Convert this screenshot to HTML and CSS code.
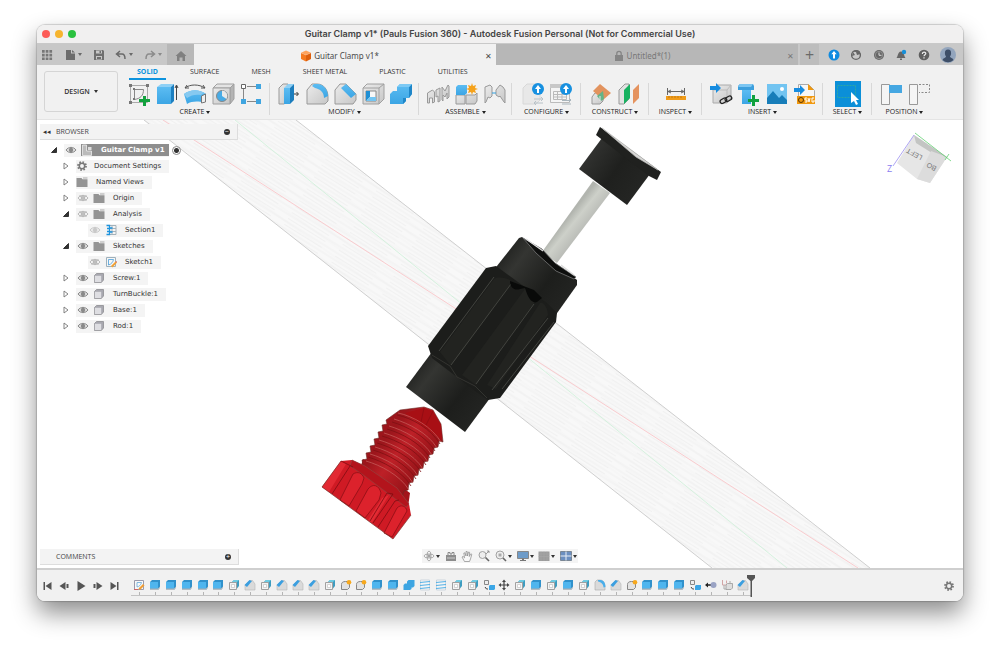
FILE: index.html
```
<!DOCTYPE html>
<html lang="en">
<head>
    <meta charset="utf-8">
    <title>Guitar Clamp v1* - Autodesk Fusion Personal</title>
    <link rel="stylesheet" href="styles.css">
</head>
<body>
    <!-- icon sprite -->
    <svg class="sprite" aria-hidden="true">
        <defs>
            <linearGradient id="blue" x1="0" y1="0" x2="0" y2="1"><stop offset="0" stop-color="#5cbcf2"/><stop offset="1" stop-color="#3ba5e4"/></linearGradient>
            <linearGradient id="grey" x1="0" y1="0" x2="1" y2="1"><stop offset="0" stop-color="#ececec"/><stop offset="1" stop-color="#c6c6c6"/></linearGradient>
        </defs>

        <!-- create -->
        <symbol id="i-sketch" viewBox="0 0 24 24"><path d="M3.500 3.500h17v17h-17z" fill="none" stroke="#aaa"/><path d="M7.500 17.500v-10h9c0 6-3 9-9 10z" fill="none" stroke="#888"/><path d="M2 2h3v3H2zM19 2h3v3h-3zM2 19h3v3H2zM6 6h2v2H6zM6 16h2v2H6z" fill="#777"/><path d="M16 14h3v3h4v3h-4v4h-3v-4h-4v-3h4z" fill="#12a13d"/></symbol>
        <symbol id="i-extrude" viewBox="0 0 24 24"><path d="M2 5l4-3h13l-3 3z" fill="#8fd0f5"/><path d="M16 5l3-3v17l-3 3z" fill="#1c7fc0"/><path d="M2 5h14v17H2z" fill="url(#blue)"/><path d="M21.500 18V4M20 6l1.500-3L23 6" fill="none" stroke="#444"/></symbol>
        <symbol id="i-revolve" viewBox="0 0 24 24"><path d="M2 6C7 2 16 2 22 6M2 6l2-3M2 6h4M22 6h-4M22 6l-2-3" fill="none" stroke="#555"/><path d="M1 12c7-5 15-5 22 0l-2 9c-5-2-12-2-17 1z" fill="url(#blue)"/><path d="M1 12c7-5 15-5 22 0-3-1-4 0-5 1-5-1-10 0-14 3z" fill="#86c9f0"/><path d="M18.500 14l4-2v8l-4 1z" fill="#eee" stroke="#777"/></symbol>
        <symbol id="i-hole" viewBox="0 0 24 24"><path d="M2 6l4-4h17l-4 4z" fill="#e4e4e4" stroke="#a0a0a0"/><path d="M19 6l4-4v15l-4 5z" fill="#b4b4b4" stroke="#a0a0a0"/><path d="M2 6h17v16H2z" fill="url(#grey)" stroke="#a0a0a0"/><circle cx="11" cy="14" r="5.500" fill="#47abe6" stroke="#888"/><path d="M11 14V8.500a5.500 5.500 0 0 1 4.500 8.500z" fill="#e9e9e9"/></symbol>
        <symbol id="i-pattern" viewBox="0 0 24 24"><path d="M4.500 7v10M8 4.500h9M8 19.500h9" fill="none" stroke="#888"/><path d="M2.500 2.500h4v4h-4z" fill="#fff" stroke="#666"/><path d="M17 2h5v5h-5zM2 17h5v5H2zM17 17h5v5h-5z" fill="#3fa5e0"/></symbol>
        <!-- modify -->
        <symbol id="i-press" viewBox="0 0 24 24"><path d="M2 6l4-4h5v17l-4 3H2z" fill="url(#grey)" stroke="#999"/><path d="M7 6l4-4h6l-4 4z" fill="#8ed0f5"/><path d="M7 6h6v16H7z" fill="url(#blue)"/><path d="M13 6l4-4v16l-4 4z" fill="#1b7dbd"/><path d="M17 12h4M19.500 10l2 2-2 2" fill="none" stroke="#333"/></symbol>
        <symbol id="i-fillet" viewBox="0 0 24 24"><path d="M2 8l5-6h5c7 0 11 6 11 13v4l-3 3H2z" fill="url(#grey)" stroke="#999"/><path d="M9 2h4c7 1 10 7 10 12l-4 2c0-6-4-9-9-10l-3-2z" fill="url(#blue)"/></symbol>
        <symbol id="i-chamfer" viewBox="0 0 24 24"><path d="M2 8l5-6h6l10 10v6l-3 4H2z" fill="url(#grey)" stroke="#999"/><path d="M13 2l10 10-5 4L8 6z" fill="url(#blue)"/></symbol>
        <symbol id="i-shell" viewBox="0 0 24 24"><path d="M2 6l4-4h17v15l-5 5H2z" fill="url(#grey)" stroke="#a0a0a0"/><path d="M18 6l5-4M18 6v16M2 6h16" stroke="#a0a0a0"/><path d="M5 9h10v10H5z" fill="#f8f8f8" stroke="#888"/><path d="M5 9h4v6l-4 4z" fill="#1f8fd4"/><path d="M5 19l4-4h6v4z" fill="#73c5f2"/></symbol>
        <symbol id="i-combine" viewBox="0 0 24 24"><path d="M8 5l3-3h12v10l-3 4h-3v3l-3 3H1V12l3-3h4z" fill="url(#blue)"/><path d="M20 5l3-3v10l-3 4zM14 16h3v3l-3 3z" fill="#1f86c8"/><path d="M8 5l3-3h12l-3 3z" fill="#7cc9f4"/></symbol>
        <!-- assemble -->
        <symbol id="i-component" viewBox="0 0 24 24"><path d="M1.500 11l5-3 2 2v10l-2 1v-5h-3v5h-2zM10 8l4-2v13l-2 1v-6l-2 1zM16 5l3 4 3-6 1 1v11l-2 2v-6l-2 4-2-2v6l-1-1z" fill="url(#grey)" stroke="#999"/></symbol>
        <symbol id="i-newcomp" viewBox="0 0 24 24"><path d="M2 13h9v9H2zM12 13h9l2-2v8l-2 3h-9z" fill="url(#grey)" stroke="#999"/><path d="M2 5l2-2h9v8l-2 2H2z" fill="url(#blue)"/><path d="M18 1l1 3 3-1-1 3 3 1-3 1 1 3-3-1-1 3-1-3-3 1 1-3-3-1 3-1-1-3 3 1z" fill="#f5a21b"/></symbol>
        <symbol id="i-joint" viewBox="0 0 24 24"><path d="M3 5l5-2 2 2v9l-2 2-2-1-2 5-1 1zM21 5l-3-2-4 5v5l3 2 1-1 4 6 1 1V8z" fill="url(#grey)" stroke="#999"/><path d="M10 11h4" stroke="#2f9fe0"/></symbol>
        <!-- configure -->
        <symbol id="i-config" viewBox="0 0 24 24"><path d="M2 6l4-4h13v16l-4 4H2z" fill="#e8e8e8" stroke="#d8d8d8"/><circle cx="17" cy="7" r="6" fill="#1790e0"/><path d="M17 3l3 4h-2v4h-2V7h-2z" fill="#fff"/><path d="M13 17h9M20 15l2 2-2 2M22 21h-9M15 19l-2 2 2 2" stroke="#b8c2c8" fill="none"/></symbol>
        <symbol id="i-table" viewBox="0 0 24 24"><path d="M1.500 2.500h19v18h-19z" fill="#f5f5f5" stroke="#bbb"/><path d="M1 2h20v4H1z" fill="#c8c8c8"/><path d="M4.500 9.500h13v8h-13zM4 12.500h14M4 15h14M8.500 9v9M13 9v9" fill="none" stroke="#bbb"/><circle cx="17" cy="7" r="6" fill="#1790e0"/><path d="M17 3l3 4h-2v4h-2V7h-2z" fill="#fff"/><path d="M13 18.500h9M20 16l2 2-2 2M22 22h-9" stroke="#a9b5bc" fill="none"/></symbol>
        <!-- construct -->
        <symbol id="i-plane" viewBox="0 0 24 24"><path d="M3 15l3-4h8v8l-3 3H3z" fill="url(#grey)" stroke="#999"/><path d="M4 9l7-7 11 9-8 7z" fill="#e2935e"/><path d="M8 14l6-5 1 8-3 2z" fill="#63b487"/><path d="M11 14v5" stroke="#e8e8e8"/></symbol>
        <symbol id="i-midplane" viewBox="0 0 24 24"><path d="M2 8l6-6h4v15l-5 5H2z" fill="#e2e2e2" stroke="#999"/><path d="M7 8l6-6v14l-6 6z" fill="#17b260"/><path d="M16 8l6-6v14l-6 6z" fill="#e5935f"/></symbol>
        <!-- inspect -->
        <symbol id="i-measure" viewBox="0 0 24 24"><path d="M3.500 6v7M20.500 6v7M4 9.500h16M7 8L4 9.500 7 11M17 8l3 1.500-3 1.500" fill="none" stroke="#666"/><path d="M2 14h20v4H2z" fill="#f09c1a"/><path d="M5 14v2M8 14v2M11 14v2M14 14v2M17 14v2" stroke="#c47a10"/></symbol>
        <!-- insert -->
        <symbol id="i-derive" viewBox="0 0 24 24"><path d="M4 7l4-4h14v13l-4 5H4z" fill="url(#grey)" stroke="#aaa"/><path d="M18 8l4-5M18 8v12M4 8h14" stroke="#bbb"/><path d="M1 4h6V1l5 5-5 5V8H1z" fill="#168ce0"/><rect x="11" y="17" width="7" height="4" rx="2" transform="rotate(-30 14 19)" fill="none" stroke="#222" stroke-width="1.300"/><rect x="16" y="15" width="7" height="4" rx="2" transform="rotate(-30 19 17)" fill="none" stroke="#222" stroke-width="1.300"/></symbol>
        <symbol id="i-fastener" viewBox="0 0 24 24"><path d="M1 4l2-2h13l1 2v4H1z" fill="#3c9fdd"/><path d="M5 8h9v14H5z" fill="url(#blue)"/><path d="M3 2h13l-2 3H1z" fill="#7cc6f2"/><path d="M15 13h3v4h4v3h-4v4h-3v-4h-4v-3h4z" fill="#12a13d"/></symbol>
        <symbol id="i-canvas" viewBox="0 0 24 24"><path d="M2 2h20v20H2z" fill="#72c4f1"/><path d="M2 22v-6l6-7 6 7 3-3 5 5v4z" fill="#177db9"/><circle cx="17" cy="7" r="2" fill="#fff"/></symbol>
        <symbol id="i-svgfile" viewBox="0 0 24 24"><path d="M5.500 2.500h10l6 6v6h-16z" fill="#f6f6f6" stroke="#aaa"/><path d="M15 2l6 6h-6zM4 14h18v8H4z" fill="#f0980f"/><path d="M1 6h6V3l5 5-5 5v-3H1z" fill="#168ce0"/><circle cx="8" cy="18" r="2.500" fill="none" stroke="#5c3600"/><path d="M14 16h-2v2h2v2h-2M15 16l1 4 1-4M21 16h-2v4h2v-2" fill="none" stroke="#fff"/></symbol>
        <!-- select, position -->
        <symbol id="i-select" viewBox="0 0 26 26"><path d="M0 0h26v26H0z" fill="#0b8fd8"/><path d="M2.500 4.500h18v12h-18z" fill="none" stroke="#2ca6a4" stroke-dasharray="2 1"/><path d="M16 11v11l3-2 2 4 2-1-2-4h3z" fill="#fff"/></symbol>
        <symbol id="i-capture" viewBox="0 0 24 24"><path d="M2.500 2.500h8v20h-8z" fill="#f5f5f5" stroke="#999"/><path d="M10 3h13v8H10z" fill="#45a7e2"/></symbol>
        <symbol id="i-revert" viewBox="0 0 24 24"><path d="M2.500 2.500h8v20h-8z" fill="#f5f5f5" stroke="#999"/><path d="M12 2.500h10.500v8H12" fill="none" stroke="#888" stroke-dasharray="2 1.500"/></symbol>

        <!-- quick access -->
        <symbol id="i-apps" viewBox="0 0 12 12"><path d="M1 1h2.700v2.700H1zM4.700 1h2.700v2.700H4.700zM8.400 1h2.700v2.700H8.400zM1 4.700h2.700v2.700H1zM4.700 4.700h2.700v2.700H4.700zM8.400 4.700h2.700v2.700H8.400zM1 8.400h2.700v2.700H1zM4.700 8.400h2.700v2.700H4.700zM8.400 8.400h2.700v2.700H8.400z" fill="#777"/></symbol>
        <symbol id="i-file" viewBox="0 0 12 12"><path d="M2 1h5v3.500h4V11H2zM8 1l3 2.500H8z" fill="#6c6c6c"/></symbol>
        <symbol id="i-save" viewBox="0 0 12 12"><path d="M1 1h9l1 1v9H1zM3 1.500v3h6v-3zM3 7v3.500h6V7z" fill="#6f6f6f" fill-rule="evenodd"/><path d="M6.500 2h1.500v2H6.500zM4 8h4v2H4z" fill="#6f6f6f"/></symbol>
        <symbol id="i-undo" viewBox="0 0 12 12"><path d="M5 2L1.500 5 5 8M2 5h5c2 0 3 2 3 5" fill="none" stroke="currentColor" stroke-width="1.500"/></symbol>
        <symbol id="i-home" viewBox="0 0 12 12"><path d="M6 1l5.500 5H10v5H7.500V7.500h-3V11H2V6H.5z" fill="#808080"/></symbol>
        <symbol id="i-box" viewBox="0 0 12 12"><path d="M6 .5l5 2.300-5 2.200-5-2.200z" fill="#ffa25a"/><path d="M1 3l5 2.200v6.300L1 9z" fill="#f57a1f"/><path d="M11 3L6 5.200v6.300L11 9z" fill="#dd5f0c"/></symbol>
        <symbol id="i-lock" viewBox="0 0 12 12"><path d="M2 5h8v6H2z" fill="#858585"/><path d="M3.800 5V3.500a2.200 2.200 0 0 1 4.400 0V5" fill="none" stroke="#858585" stroke-width="1.300"/></symbol>
        <symbol id="i-online" viewBox="0 0 12 12"><circle cx="6" cy="6" r="5.500" fill="#0f8be0"/><path d="M6 2l2.700 3.300H7V9.500H5V5.300H3.300z" fill="#fff"/></symbol>
        <symbol id="i-globe" viewBox="0 0 12 12"><circle cx="6" cy="6" r="4.400" fill="none" stroke="#666" stroke-width="1.400"/><path d="M2 2.500l4 .5 1 3 3.500-1-1-3-3-1zM3 3l2 3-3 1z" fill="#666"/></symbol>
        <symbol id="i-clock" viewBox="0 0 12 12"><circle cx="6" cy="6" r="5" fill="#666"/><circle cx="6" cy="6" r="3.700" fill="none" stroke="#aaa" stroke-width=".6"/><path d="M6 3.500V6.300h2.500" fill="none" stroke="#ddd"/></symbol>
        <symbol id="i-bell" viewBox="0 0 12 12"><path d="M1.500 9C3 7.500 2.500 3 6 2.500 9.500 3 9 7.500 10.500 9zM5 9.500h2V11H5z" fill="#666"/><circle cx="9" cy="3" r="2.200" fill="#168fd9"/></symbol>
        <symbol id="i-help" viewBox="0 0 12 12"><circle cx="6" cy="6" r="5.300" fill="#5f5f5f"/><path d="M4.300 5c0-2.500 3.500-2.300 3.500-.5C7.800 5.700 6 5.800 6 7.300M6 8.200v1.300" fill="none" stroke="#eee" stroke-width="1.200"/></symbol>
        <symbol id="i-user" viewBox="0 0 16 16"><circle cx="8" cy="8" r="8" fill="#93a5bd"/><path d="M8 2.500c4 0 3.500 5 2 7 0 1.500 2.500 1 3.500 3.500A8 8 0 0 1 2.500 13C3.500 10.500 6 11 6 9.500c-1.500-2-2-7 2-7z" fill="#3e4f68"/></symbol>

        <!-- browser tree -->
        <symbol id="i-open" viewBox="0 0 8 8"><path d="M6.500 1.500v5h-5z" fill="#333" stroke="#333"/></symbol>
        <symbol id="i-closed" viewBox="0 0 8 8"><path d="M2 1v6l4-3z" fill="#fff" stroke="#777" stroke-width=".9"/></symbol>
        <symbol id="i-eye" viewBox="0 0 14 10"><path d="M2 5c2.500-3.500 7.500-3.500 10 0-2.500 3.500-7.500 3.500-10 0z" fill="#ddd" stroke="currentColor"/><circle cx="7" cy="5" r="2.200" fill="currentColor"/></symbol>
        <symbol id="i-eyeoff" viewBox="0 0 14 10"><path d="M2 5c2.500-3.500 7.500-3.500 10 0-2.500 3.500-7.500 3.500-10 0zM3.500 2.500l7 5M10.500 2.500l-7 5" fill="none" stroke="currentColor" stroke-width=".8"/><circle cx="7" cy="5" r="1.800" fill="none" stroke="currentColor" stroke-width=".8"/></symbol>
        <symbol id="i-assembly" viewBox="0 0 12 12"><path d="M1.500 1h4v6h5v4.500h-9z" fill="#bbb" stroke="#eee" stroke-width=".8"/><path d="M7 3h3.500v3H7z" fill="#ddd"/></symbol>
        <symbol id="i-gear" viewBox="0 0 12 12"><circle cx="6" cy="6" r="4" fill="none" stroke="#777" stroke-width="1.800" stroke-dasharray="1.570 1.570"/><circle cx="6" cy="6" r="2.700" fill="none" stroke="#777" stroke-width="1.500"/></symbol>
        <symbol id="i-folder" viewBox="0 0 12 12"><path d="M.5 2h5l1 1.300h5V11H.5z" fill="#949494"/><path d="M7 1.500h4.500v1H7z" fill="#aaa"/></symbol>
        <symbol id="i-section" viewBox="0 0 12 12"><path d="M2 1.500h9v9H2M2 4.500h9M2 7.500h9M7 1.500v9" fill="none" stroke="#a5b2ba"/><path d="M1.500 1.500h3v9h-3M4.500 4h3M4.500 8h3M2 4.500h2M2 7.500h2" fill="none" stroke="#1d93dd" stroke-width="1.300"/></symbol>
        <symbol id="i-sketchdoc" viewBox="0 0 12 12"><path d="M1.500 1.500h9v9h-9z" fill="#f6f6f6" stroke="#9eb0bb"/><path d="M3.500 9V3.500h5C8 6 6.500 8 3.500 9z" fill="none" stroke="#4aa0dc" stroke-width=".8"/><path d="M6 10l4.500-4.500 1.300 1.300L7.300 11.500z" fill="#f3a032"/><path d="M10.500 5.500l1.300 1.300.2-1.300z" fill="#c33"/></symbol>
        <symbol id="i-body" viewBox="0 0 12 12"><path d="M1.500 3.500l2-2h7V8l-2.200 2.500H1.500z" fill="#a8a8b0" stroke="#8e8e92" stroke-width=".8"/><path d="M1.800 3.800h6.400v6.300H1.800z" fill="#dedee2"/></symbol>

        <!-- navigation bar -->
        <symbol id="n-orbit" viewBox="0 0 12 12"><ellipse cx="6" cy="6" rx="5" ry="2" fill="none" stroke="#999" stroke-width=".8"/><ellipse cx="6" cy="6" rx="2" ry="5" fill="none" stroke="#999" stroke-width=".8"/><path d="M4.500 6h3M6 4.500v3" stroke="#777" stroke-width=".8"/></symbol>
        <symbol id="n-look" viewBox="0 0 12 12"><path d="M1 5h10v6H1z" fill="#8c8c8c"/><path d="M3 5V2.500h2V4h2V2.500h2V5" fill="none" stroke="#888"/><path d="M2 8h8" stroke="#ccc"/></symbol>
        <symbol id="n-pan" viewBox="0 0 12 12"><path d="M3.500 11.500L1 7l1-.6 1.600 1.400L2.800 3l1-.2L5 6V1.500h1.200L6.500 6l1-4 1.100.3L8.300 6.500l1.500-2.700 1 .5L9.500 9 8.500 11.500z" fill="#f8f8f8" stroke="#888" stroke-width=".7"/></symbol>
        <symbol id="n-zoom" viewBox="0 0 12 12"><circle cx="4.500" cy="5" r="3.500" fill="#eee" stroke="#999" stroke-width=".9"/><path d="M7.500 7.500L11 11" stroke="#666" stroke-width="1.600"/><path d="M8 4l3-3M9 1h2v2" fill="none" stroke="#888" stroke-width=".8"/></symbol>
        <symbol id="n-fit" viewBox="0 0 12 12"><circle cx="5" cy="5" r="4" fill="#eee" stroke="#999" stroke-width=".9"/><path d="M3.500 3.500h3v3h-3z" fill="#aaa"/><path d="M8 8l3 3" stroke="#666" stroke-width="1.600"/></symbol>
        <symbol id="n-display" viewBox="0 0 12 12"><path d="M.5 1.500h11v7H.5z" fill="#6e9cc9" stroke="#888"/><path d="M5 8.500h2V10h2v1H3v-1h2z" fill="#777"/></symbol>
        <symbol id="n-grid" viewBox="0 0 12 12"><path d="M.5 1.500h11v9.500H.5z" fill="#9c9c9c"/><path d="M.5 4h11M.5 6.500h11M3 1.500V11M6 1.500V11M9 1.500V11" stroke="#aaa" stroke-width=".5"/></symbol>
        <symbol id="n-views" viewBox="0 0 12 12"><path d="M.5 1.500h11v9H.5z" fill="#6c8fc0" stroke="#7a8795"/><path d="M.5 6h11M6 1.500v9" stroke="#e8eef5"/></symbol>

        <!-- timeline features -->
        <symbol id="t-sketch" viewBox="0 0 12 12"><path d="M1.500 1.500h9v9h-9z" fill="#f8f8f8" stroke="#99a"/><path d="M4 8V3.500h4.500C8 6 6 7.500 4 8z" fill="none" stroke="#66a9d8" stroke-width=".8"/><path d="M5.500 9.500L10 5l1.500 1.500L7 11z" fill="#ef9d35"/><path d="M1 10.500h4" stroke="#c66"/></symbol>
        <symbol id="t-extrude" viewBox="0 0 12 12"><path d="M1 3l2-2h8v7L9 11H1z" fill="#3191cb"/><path d="M1 3h8v6.500H1z" fill="#4fb5ee"/><path d="M1 9.500h8l2-2V9l-2 2H1z" fill="#b4bcc2"/></symbol>
        <symbol id="t-push" viewBox="0 0 12 12"><path d="M4 3l2-2h5v6L9 9.500z" fill="#3e9cc0"/><path d="M4 3l2-2h5L9 3z" fill="#6fcbe2"/><path d="M1.500 3.500h7v7h-7z" fill="#f3f3f3" stroke="#a0a0a0"/><path d="M3.500 5.500h3v3h-3z" fill="#fff" stroke="#bbb" stroke-width=".6"/></symbol>
        <symbol id="t-chamfer" viewBox="0 0 12 12"><path d="M1 11V6l5-4.500h2.500L11 5v6z" fill="#dadada" stroke="#b5b5b5" stroke-width=".6"/><path d="M.5 6l5-5L8 2 3 8z" fill="#3b9fe0"/></symbol>
        <symbol id="t-fillet" viewBox="0 0 12 12"><path d="M1 11V3l2-2h3c4 0 5 4 5 8v2z" fill="#dadada" stroke="#aaa" stroke-width=".6"/><path d="M4 1h3c3.500 1 4.500 4 4.500 7l-2 .5C9.500 5 7 3 4 2.500z" fill="#4aaeea"/></symbol>
        <symbol id="t-form" viewBox="0 0 12 12"><path d="M1.500 10.500V5.500c0-2 1.500-3 4-3h4v6L7.500 10.500z" fill="#e2e2e2" stroke="#888"/><circle cx="9" cy="3.300" r="2.300" fill="#f7a81c"/></symbol>
        <symbol id="t-combine" viewBox="0 0 12 12"><path d="M4 2.500L5.500 1h6v6L10 8.500H8.500V10L7 11H.5V6L2 4.500h2z" fill="#3da5e2"/></symbol>
        <symbol id="t-thread" viewBox="0 0 12 12"><path d="M1.500 1v10h9V1z" fill="#f5f5f5" stroke="#b5c5d0" stroke-width=".6"/><path d="M1 3.500l10-1M1 6.500l10-1M1 9.500l10-1" stroke="#53b0e6" stroke-width="1.200"/></symbol>
        <symbol id="t-joint" viewBox="0 0 12 12"><path d="M1.500 1.500h4v4h-4z" fill="#eee" stroke="#888"/><path d="M2 8l1.500 2H5" fill="none" stroke="#444"/><path d="M6 7l1-1h5v4L11 11H6z" fill="#3ba6e6"/></symbol>
        <symbol id="t-move" viewBox="0 0 12 12"><path d="M6 .5L8 3H6.600v2.400H9V4l2.500 2L9 8V6.600H6.600V9H8l-2 2.500L4 9h1.400V6.600H3V8L.5 6 3 4v1.400h2.400V3H4z" fill="#444"/></symbol>
        <symbol id="t-rigid" viewBox="0 0 12 12"><path d="M0 6l3-2.500v1.700h3v1.600H3v1.700z" fill="#222"/><circle cx="8.500" cy="6" r="3" fill="#9aa3c4"/></symbol>
        <symbol id="t-link" viewBox="0 0 12 12"><path d="M1.500 1v5h4M5.500 1.500v3" fill="none" stroke="#d3a5a5" /><path d="M5 6l1.500-1.500h5V9L10 10.500H5z" fill="#ddd" stroke="#999" stroke-width=".8"/><path d="M3 6v4h2M9 2v3" fill="none" stroke="#aaa"/></symbol>
    </svg>

    <div class="window">
        <header class="titlebar">
            <div class="lights">
                <button class="light red" aria-label="Close"></button>
                <button class="light yellow" aria-label="Minimize"></button>
                <button class="light green" aria-label="Zoom"></button>
            </div>
            <h1>Guitar Clamp v1* (Pauls Fusion 360) - Autodesk Fusion Personal (Not for Commercial Use)</h1>
        </header>

        <div class="tabbar">
            <div class="quick">
                <button aria-label="Data panel"><svg class="s12"><use href="#i-apps"/></svg></button>
                <button aria-label="File"><svg class="s12"><use href="#i-file"/></svg><i class="caret"></i></button>
                <button aria-label="Save"><svg class="s12"><use href="#i-save"/></svg></button>
                <button aria-label="Undo"><svg class="s12"><use href="#i-undo"/></svg><i class="caret"></i></button>
                <button class="redo" aria-label="Redo"><svg class="s12 flip"><use href="#i-undo"/></svg><i class="caret"></i></button>
            </div>
            <button class="home" aria-label="Home"><svg class="s12"><use href="#i-home"/></svg></button>
            <div class="doc active"><span><svg class="s12"><use href="#i-box"/></svg>Guitar Clamp v1*</span><button aria-label="Close tab">✕</button></div>
            <div class="doc"><span><svg class="s12"><use href="#i-lock"/></svg>Untitled*(1)</span><button aria-label="Close tab">✕</button></div>
            <button class="add" aria-label="New tab">+</button>
            <div class="account">
                <button aria-label="Online"><svg class="s12"><use href="#i-online"/></svg></button>
                <button aria-label="Extensions"><svg class="s12"><use href="#i-globe"/></svg></button>
                <button aria-label="Job status"><svg class="s12"><use href="#i-clock"/></svg></button>
                <button aria-label="Notifications"><svg class="s12"><use href="#i-bell"/></svg></button>
                <button aria-label="Help"><svg class="s12"><use href="#i-help"/></svg></button>
                <button aria-label="Profile"><svg class="s16"><use href="#i-user"/></svg></button>
            </div>
        </div>

        <div class="ribbon">
            <button class="design">DESIGN <i class="caret"></i></button>
            <div class="tools">
                <nav class="spaces">
                    <a href="#" class="on">SOLID</a>
                    <a href="#">SURFACE</a>
                    <a href="#">MESH</a>
                    <a href="#">SHEET METAL</a>
                    <a href="#">PLASTIC</a>
                    <a href="#">UTILITIES</a>
                </nav>
                <div class="groups" id="groups"></div>
            </div>
        </div>

        <main class="canvas">
            <svg class="scene" viewBox="37 120 926 448" preserveAspectRatio="xMidYMid slice" role="img" aria-label="Clamp model">
                <defs>
                    <linearGradient id="cyl" gradientUnits="userSpaceOnUse" x1="440" y1="330" x2="520" y2="392"><stop offset="0" stop-color="#20211f"/><stop offset=".2" stop-color="#343532"/><stop offset=".55" stop-color="#1d1e1c"/><stop offset="1" stop-color="#272826"/></linearGradient>
                    <linearGradient id="cap" gradientUnits="userSpaceOnUse" x1="585" y1="150" x2="645" y2="192"><stop offset="0" stop-color="#343533"/><stop offset=".5" stop-color="#1f201e"/><stop offset=".9" stop-color="#242523"/><stop offset="1" stop-color="#3c3c3a"/></linearGradient>
                    <linearGradient id="rod" gradientUnits="userSpaceOnUse" x1="569" y1="216" x2="584" y2="228"><stop offset="0" stop-color="#b2b5af"/><stop offset=".4" stop-color="#cdd0c9"/><stop offset="1" stop-color="#bbbdb8"/></linearGradient>
                    <linearGradient id="redthread" gradientUnits="userSpaceOnUse" x1="385" y1="440" x2="425" y2="470"><stop offset="0" stop-color="#9c161c"/><stop offset=".35" stop-color="#bd2027"/><stop offset="1" stop-color="#931217"/></linearGradient>
                    <pattern id="lines" width="60" height="7" patternUnits="userSpaceOnUse" patternTransform="rotate(32)"><path d="M0 1h60M0 4.500h44" stroke="#e8e9e9" stroke-width=".5"/></pattern>
                    <pattern id="lines2" width="50" height="9" patternUnits="userSpaceOnUse" patternTransform="rotate(36)"><path d="M0 2h50" stroke="#eff0f0" stroke-width=".5"/></pattern>
                </defs>
                <!-- ground plane -->
                <path d="M144 120h152l574 448H712z" fill="#f8f8f8"/>
                <path d="M144 120h152l574 448H712z" fill="url(#lines2)"/>
                <path d="M144 120h152l574 448H712z" fill="url(#lines)"/>
                <path d="M144 120l568 448M296 120l574 448" stroke="#c4c4c4" fill="none" stroke-width=".8"/>
                <path d="M163 120l695 448" stroke="#f9c6c9" stroke-width=".9"/>
                <path d="M235 120l552 448" stroke="#cdf0d8" stroke-width=".8"/>
                <!-- knob and rod -->
                <path d="M593 181l17 12-53 70-15-11z" fill="url(#rod)"/>
                <path d="M602 138l-23 31 48 36 23-31z" fill="url(#cap)"/>
                <path d="M600 127l61 45-4 8-8-4-53-41z" fill="#20211f"/>
                <path d="M602 128l56 42-22-13z" fill="#d8d8d6" stroke="#b8b8b6" stroke-width=".7"/>
                <!-- turnbuckle -->
                <path d="M522 237l55 43v5l-22 31-62-45 26-33z" fill="url(#cyl)"/>
                <path d="M523 238l19 11 13 14 21 14-2 2-18-8-20-18z" fill="#0d0e0d" stroke="#777" stroke-width=".8"/>
                <path d="M526 239l17 12M561 265l13 10" stroke="#ddd" stroke-width="1.200"/>
                <path d="M432 352l-26 35 59 45 28-38z" fill="url(#cyl)"/>
                <path d="M486 268l10-2 52 38 9 9-1 9-56 76-12 2-10-7-46-35-4-12z" fill="#1c1d1b"/>
                <path d="M494 279c4-3 12-1 16 1l1 4-60 82-11-14zM525 289c6 0 8 6 9 14l-58 82-14-10zM540 303c4-2 8 6 8 12l-52 74-9-4z" fill="#222320"/>
                <path d="M494 277l-55 74M511 284l-60 81M534 304l-58 80M548 318l-56 72M554 322l-52 67" stroke="#4b4c48" stroke-width=".8" fill="none"/>
                <path d="M510 281c0 7 5 10 10 8l5-1c3 10 7 16 12 14l5-4-8-8z" fill="#090a09"/>
                <path d="M432 355l18 11 7 11 18 9 12 12" fill="none" stroke="#383935" stroke-width=".8"/>
                <!-- screw -->
                <path d="M363 459l47 34-2 14-48-38z" fill="#a3141a"/>
                <path d="M400 410l24-3 9 3 8 14 2 18-4-1-1 6-4 1-1 6-4 1-1 6-4 1-1 6-4 1-1 6-4 1-1 6-4 1-1 7-4 1-2 7-43-32 4-1-1-5 5-1-1-6 5-1-1-6 5-1-1-6 5-1-1-6 5-1-1-6 5-1-1-4z" fill="url(#redthread)" stroke="#6a2a25" stroke-width=".6"/>
                <path d="M405 413l19-5 9 3 8 14 1 15z" fill="#a80f14"/>
                <path d="M424 408l-3 14M433 411l-7 14" stroke="#7f0b10" stroke-width=".5"/>
                <g stroke="#c9615f" stroke-width=".7" fill="none">
                    <path d="M398 413c15 3 34 14 43 29M394 419c14 4 34 14 43 29M389 426c14 4 34 14 43 29M384 433c14 4 35 14 44 29M379 440c14 4 35 14 44 29M375 447c14 4 34 14 43 29M370 454c14 4 34 14 43 29M366 461c14 4 34 14 43 29"/>
                </g>
                <g stroke="#7d1013" stroke-width=".8" fill="none">
                    <path d="M397 415c15 3 34 14 43 29M392 422c14 4 34 14 43 29M387 429c14 4 34 14 43 29M382 436c14 4 35 14 44 29M377 443c14 4 35 14 44 29M373 450c14 4 34 14 43 29M368 457c14 4 34 14 43 29"/>
                </g>
                <path d="M341 461l11-1 13 6 32 22 12 16 2 11-18 24-71-52z" fill="#cf1a24"/>
                <path d="M352 460l13 6 32 22 12 16-3 3-44-33-12-8z" fill="#b3141c" stroke="#8a4a44" stroke-width=".6"/>
                <path d="M340 500l13-26c5-3 9-1 11 4l-2 6-13 22zM356 511l12-22c5-6 11-4 13 4l-2 7-14 18zM384 533l13-25c4-4 9-2 10 3l-15 26z" fill="#dc222c" stroke="#8d0f15" stroke-width=".8"/>
                <path d="M322 487l19-26 5 3-17 28zM368 520l14-22 7-3-17 28z" fill="#e22a33"/>
                <path d="M332 494l18-28M370 521l17-28 6 1-20 29M378 527l17-26 4-1M341 461l12 6" fill="none" stroke="#7e0c12" stroke-width=".8"/>
                <path d="M341 461l-19 26 71 52 18-24" fill="none" stroke="#7b3a33" stroke-width=".7"/>
            </svg>

            <svg class="viewcube" viewBox="882 130 72 58" role="img" aria-label="View cube">
                <path d="M914 135l33 22-17 26-13-4-20-16z" fill="#e6e6e6"/>
                <path d="M914 135l33 22-7 1-24-15z" fill="#c3c5c3"/>
                <path d="M931 151l16 6-17 26-13-4z" fill="#dcdcdc"/>
                <path d="M914 135l-21 31" stroke="#9a8ff0" stroke-width=".8"/>
                <path d="M915 133l36 28M949 154l-4 6" stroke="#63d072" stroke-width=".8"/>
                <text x="887" y="172" class="axis">Z</text>
                <text class="face" transform="translate(923 156) rotate(208)">LEFT</text>
                <text class="face" transform="translate(937 167) rotate(208)">BO</text>
            </svg>

            <section class="browser">
                <div class="panel-head"><button aria-label="Collapse">◂◂</button><h2>BROWSER</h2><button class="dot" aria-label="Hide panel">−</button></div>
                <ul class="tree" id="tree"></ul>
            </section>

            <section class="comments panel-head"><h2>COMMENTS</h2><button class="dot" aria-label="Show comments">+</button></section>

            <div class="navbar">
                <button aria-label="Orbit"><svg class="s12"><use href="#n-orbit"/></svg><i class="caret"></i></button>
                <button aria-label="Look at"><svg class="s12"><use href="#n-look"/></svg></button>
                <button aria-label="Pan"><svg class="s12"><use href="#n-pan"/></svg></button>
                <button aria-label="Zoom"><svg class="s12"><use href="#n-zoom"/></svg></button>
                <button aria-label="Fit"><svg class="s12"><use href="#n-fit"/></svg><i class="caret"></i></button>
                <button aria-label="Display settings"><svg class="s12"><use href="#n-display"/></svg><i class="caret"></i></button>
                <button aria-label="Grid and snaps"><svg class="s12"><use href="#n-grid"/></svg><i class="caret"></i></button>
                <button aria-label="Viewports"><svg class="s12"><use href="#n-views"/></svg><i class="caret"></i></button>
            </div>
        </main>

        <footer class="timeline">
            <div class="play">
                <button aria-label="To start"><svg viewBox="0 0 10 10"><path d="M1 1h1.500v8H1zM9 1v8L3 5z"/></svg></button>
                <button aria-label="Step back"><svg viewBox="0 0 10 10"><path d="M6 1v8L0 5zM7 3h2v4H7z"/></svg></button>
                <button aria-label="Play"><svg viewBox="0 0 10 10"><path d="M1 0l8 5-8 5z"/></svg></button>
                <button aria-label="Step forward"><svg viewBox="0 0 10 10"><path d="M4 1v8l6-4zM1 3h2v4H1z"/></svg></button>
                <button aria-label="To end"><svg viewBox="0 0 10 10"><path d="M7.500 1H9v8H7.500zM1 1v8l6-4z"/></svg></button>
            </div>
            <ol class="features" id="features"></ol>
            <svg class="marker" viewBox="0 0 8 22"><path d="M0 0h8v3L5 6v16H3.500V6L0 3z" fill="#555"/></svg>
            <button class="settings" aria-label="Timeline settings"><svg class="s12"><use href="#i-gear"/></svg></button>
        </footer>
    </div>

    <script>
        const groups = [
            ['CREATE', ['sketch', 'extrude', 'revolve', 'hole', 'pattern']],
            ['MODIFY', ['press', 'fillet', 'chamfer', 'shell', 'combine']],
            ['ASSEMBLE', ['component', 'newcomp', 'joint']],
            ['CONFIGURE', ['config', 'table']],
            ['CONSTRUCT', ['plane', 'midplane']],
            ['INSPECT', ['measure']],
            ['INSERT', ['derive', 'fastener', 'canvas', 'svgfile']],
            ['SELECT', ['select']],
            ['POSITION', ['capture', 'revert']]
        ];

        document.getElementById('groups').innerHTML = groups.map(([name, icons]) => `
            <div class="group">
                <div class="icons">${icons.map(i => `<button aria-label="${i}"><svg class="tool ${i}"><use href="#i-${i}"/></svg></button>`).join('')}</div>
                <button class="name">${name} <i class="caret"></i></button>
            </div>`).join('');

        // label, arrow, eye, icon, children
        const tree = ['Guitar Clamp v1', 'open', 'eye', 'assembly', [
            ['Document Settings', 'closed', '', 'gear'],
            ['Named Views', 'closed', '', 'folder'],
            ['Origin', 'closed', 'eyeoff', 'folder'],
            ['Analysis', 'open', 'eyeoff', 'folder', [['Section1', '', 'eye', 'section']]],
            ['Sketches', 'open', 'eye', 'folder', [['Sketch1', '', 'eyeoff', 'sketchdoc']]],
            ['Screw:1', 'closed', 'eye', 'body'],
            ['TurnBuckle:1', 'closed', 'eye', 'body'],
            ['Base:1', 'closed', 'eye', 'body'],
            ['Rod:1', 'closed', 'eye', 'body']
        ]];

        function row([label, arrow, eye, icon, kids], root) {
            return `<li><div class="row ${root ? 'root' : ''} ${icon}">
                ${arrow ? `<button class="arrow" aria-label="Toggle ${label}"><svg><use href="#i-${arrow}"/></svg></button>` : '<span class="arrow"></span>'}
                <div class="pill">
                    ${eye ? `<button class="eye ${eye}" aria-label="Visibility"><svg><use href="#i-${eye}"/></svg></button>` : ''}
                    <span class="label"><svg class="s12"><use href="#i-${icon}"/></svg>${label}</span>
                </div>
                ${root ? '<input type="radio" checked aria-label="Activate">' : ''}
            </div>${kids ? `<ul>${kids.map(k => row(k)).join('')}</ul>` : ''}</li>`;
        }
        document.getElementById('tree').innerHTML = row(tree, true);

        const features = ('sketch extrude extrude extrude extrude extrude push chamfer push chamfer chamfer chamfer push ' +
            'form form extrude extrude combine thread thread push push joint move push extrude push extrude push ' +
            'fillet chamfer form extrude extrude extrude joint rigid link chamfer').split(' ');
        document.getElementById('features').innerHTML = features.map(f =>
            `<li><button aria-label="${f}"><svg class="s12"><use href="#t-${f}"/></svg></button></li>`).join('');
    </script>
</body>
</html>
```

FILE: styles.css
```
* {
    box-sizing: border-box;
}
body {
    margin: 0;
    padding: 25px 37px 49px;
    min-height: 100vh;
    display: flex;
    background-color: #fff;
    font-family: "Open Sans", "Noto Sans", sans-serif;
    font-size: 7px;
    line-height: 10px;
    color: #333;
}
button {
    display: flex;
    align-items: center;
    padding: 0;
    border: none;
    background: none;
    font: inherit;
    color: inherit;
    cursor: pointer;
}
h1, h2, ul, ol {
    margin: 0;
    padding: 0;
    list-style: none;
}
svg {
    display: block;
}
.sprite {
    position: absolute;
    width: 0;
    height: 0;
}
.s12 {
    width: 12px;
    height: 12px;
}
.s16 {
    width: 16px;
    height: 16px;
}
.flip {
    transform: scaleX(-1);
}
.caret {
    border: 2px solid transparent;
    border-top: 3px solid currentColor;
    border-bottom: none;
}
.window {
    flex: 1;
    min-width: 0;
    display: flex;
    flex-direction: column;
    border-radius: 8px;
    overflow: hidden;
    background-color: #fff;
    box-shadow: 0 0 1px 1px rgba(0, 0, 0, 0.16), 0 12px 24px rgba(0, 0, 0, 0.45);
}

/* title bar */
.titlebar {
    position: relative;
    height: 19px;
    display: flex;
    align-items: center;
    justify-content: center;
    background-color: #f1f0f0;
    border-bottom: 1px solid #c9c9c9;
}
.lights {
    position: absolute;
    left: 5px;
    display: flex;
    gap: 5px;
}
.light {
    width: 8px;
    height: 8px;
    border-radius: 50%;
}
.red { background-color: #fc5b57; }
.yellow { background-color: #f6b42e; }
.green { background-color: #2ac13f; }
h1 {
    font-family: Inter, sans-serif;
    font-size: 9px;
    font-weight: 600;
    color: #444;
}

/* document tabs */
.tabbar {
    height: 21px;
    display: flex;
    background-color: #c8c8c8;
    color: #6a6a6a;
}
.quick {
    width: 130px;
    padding: 0 5px 0 4px;
    display: flex;
    align-items: center;
    justify-content: space-between;
}
.quick button {
    gap: 2px;
}
.redo {
    color: #8b8b8b;
}
.home {
    width: 27px;
    justify-content: center;
    padding-top: 3px;
    background-color: #b8b8b8;
}
.doc {
    flex: 1;
    display: flex;
    align-items: center;
    background-color: #b7b7b7;
    font-family: "Noto Sans", sans-serif;
    font-size: 8px;
    color: #777;
    padding: 2px 4px 0 0;
}
.doc.active {
    background-color: #f1f1f1;
    color: #4a4a4a;
}
.doc span {
    flex: 1;
    display: flex;
    justify-content: center;
    align-items: center;
    gap: 2px;
}
.add {
    width: 19px;
    margin: 0 2px;
    justify-content: center;
    background-color: #bdbdbd;
    font-size: 16px;
}
.account {
    width: 142px;
    padding: 0 7px;
    display: flex;
    align-items: center;
    justify-content: space-between;
}

/* ribbon */
.ribbon {
    height: 55px;
    display: flex;
    padding-left: 7px;
    background-color: #f1f1f1;
    border-bottom: 1px solid #e4e4e4;
}
.design {
    width: 74px;
    height: 41px;
    margin: 6px 2px 0 0;
    justify-content: center;
    gap: 4px;
    border: 1px solid #d5d5d5;
    border-radius: 3px;
    font-weight: 600;
}
.spaces {
    display: flex;
    gap: 32px;
    height: 15px;
    padding: 2px 0 0 17px;
}
.spaces a {
    position: relative;
    color: #333;
    text-decoration: none;
}
.spaces .on {
    color: #0d93de;
    font-weight: 700;
}
.spaces .on::after {
    content: "";
    position: absolute;
    left: -8px;
    right: -8px;
    bottom: 0;
    height: 2px;
    background-color: #0d93de;
}
.groups {
    display: grid;
    grid-template-columns: 150px 149px 93px 69px 68px 53px 121px 49px 65px;
}
.group {
    position: relative;
    display: flex;
    flex-direction: column;
    align-items: center;
}
.group:not(:last-child)::after {
    content: "";
    position: absolute;
    right: 0;
    top: 3px;
    height: 32px;
    border-right: 1px solid #d8d8d8;
}
.icons {
    height: 27px;
    display: flex;
    align-items: center;
    gap: 4px;
}
.tool {
    width: 24px;
    height: 24px;
}
.tool.select {
    width: 26px;
    height: 26px;
}
.name {
    gap: 2px;
    color: #222;
}

/* canvas */
.canvas {
    flex: 1;
    position: relative;
    min-height: 300px;
    overflow: hidden;
}
.scene {
    position: absolute;
    inset: 0;
    width: 100%;
    height: 100%;
}
.viewcube {
    position: absolute;
    top: 10px;
    right: 9px;
    width: 72px;
    height: 58px;
}
.axis {
    font: 9px "Open Sans", sans-serif;
    fill: #8a7df0;
}
.face {
    font: 7px "Liberation Sans", sans-serif;
    fill: #777;
}
.browser {
    position: absolute;
    top: 4px;
    left: 3px;
    width: 198px;
}
.panel-head {
    height: 16px;
    display: flex;
    align-items: center;
    padding: 0 7px 0 3px;
    background-color: #f3f3f3;
    border-right: 1px solid #ddd;
    border-bottom: 1px solid #ddd;
}
.panel-head h2 {
    flex: 1;
    padding-left: 5px;
    font-size: 7px;
    font-weight: 400;
    color: #444;
}
.dot {
    width: 6px;
    height: 6px;
    justify-content: center;
    border-radius: 50%;
    background-color: #333;
    color: #fff;
    line-height: 6px;
}
.comments {
    position: absolute;
    left: 3px;
    bottom: 3px;
    width: 199px;
    padding-left: 11px;
}
.tree {
    padding: 2px 0 0 8px;
    font-family: "DejaVu Sans", sans-serif;
}
.tree ul {
    padding-left: 12px;
}
.row {
    height: 16px;
    display: flex;
    align-items: center;
}
.arrow {
    width: 12px;
    margin-right: 4px;
    justify-content: center;
}
.arrow svg {
    width: 8px;
    height: 8px;
}
.pill {
    display: flex;
    align-items: center;
    gap: 3px;
    height: 13px;
    padding-right: 8px;
    background-color: #f4f4f4;
}
.eye {
    color: #8a8a8a;
}
.eyeoff {
    color: #aaa;
}
.section .eye {
    opacity: 0.4;
}
.eye svg {
    width: 14px;
    height: 10px;
}
.label {
    display: flex;
    align-items: center;
    gap: 8px;
}
.gear .label {
    gap: 6px;
}
.root .pill {
    padding-right: 0;
}
.root .label {
    height: 12px;
    padding-right: 4px;
    background-color: #8e8e8e;
    color: #fff;
    font-weight: 700;
}
.row input {
    appearance: none;
    width: 9px;
    height: 9px;
    margin: 0 0 0 3px;
    border: 1px solid #888;
    border-radius: 50%;
    background: radial-gradient(#333 0 2px, #fff 3px);
}
.navbar {
    position: absolute;
    left: 50%;
    bottom: 5px;
    transform: translateX(-50%);
    width: 156px;
    height: 14px;
    padding: 0 1px;
    display: flex;
    align-items: center;
    justify-content: space-between;
    background-color: #f4f4f4;
}
.navbar .caret {
    margin-left: 1px;
}

/* timeline */
.timeline {
    height: 33px;
    display: flex;
    align-items: center;
    padding: 0 8px 0 5px;
    background-color: #f1f1f1;
    border-top: 2px solid #cfcfcf;
}
.play {
    width: 78px;
    margin-right: 11px;
    display: flex;
    justify-content: space-between;
    fill: #555;
}
.play svg {
    width: 11px;
    height: 10px;
}
.features {
    width: 620px;
    display: flex;
    padding-top: 4px;
}
.features li {
    position: relative;
    flex: 1;
    height: 17px;
    display: flex;
    justify-content: center;
    align-items: flex-start;
    border-bottom: 1px solid #c4c4c4;
}
.features li::after {
    content: "";
    position: absolute;
    left: 50%;
    bottom: 0;
    height: 3px;
    border-left: 1px solid #b5b5b5;
}
.marker {
    width: 8px;
    height: 22px;
    margin-left: -4px;
    z-index: 1;
}
.settings {
    margin-left: auto;
}
```
